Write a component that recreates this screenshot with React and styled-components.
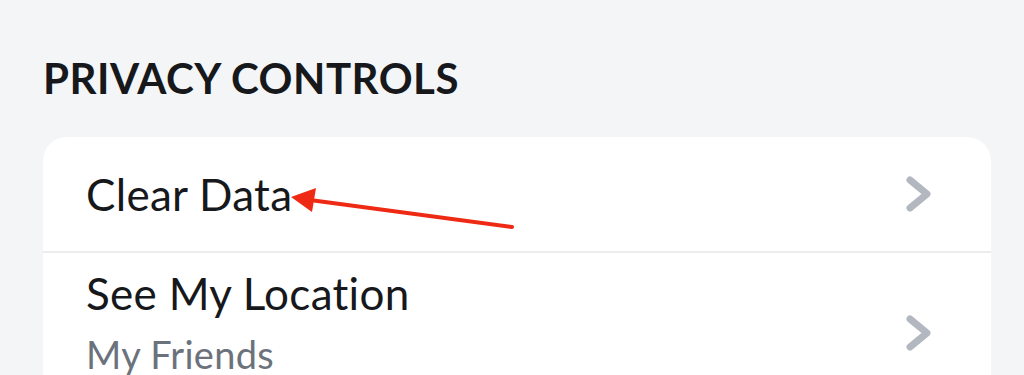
import styled, { createGlobalStyle } from 'styled-components';

const GlobalStyle = createGlobalStyle`
  html, body {
    margin: 0;
    padding: 0;
    background: #f4f5f7;
    font-family: 'Lato', 'Noto Sans', sans-serif;
  }
`;

const Page = styled.div`
  position: relative;
  width: 1024px;
  height: 375px;
  overflow: hidden;
  box-sizing: border-box;
  padding: 52px 33px 0 43px;
`;

const Heading = styled.h2`
  margin: 0 0 0 0;
  font-size: 42px;
  font-weight: 700;
  letter-spacing: 0.5px;
  color: #16181b;
  line-height: 52px;
`;

const Card = styled.div`
  margin-top: 33px;
  background: #ffffff;
  border-radius: 24px;
  overflow: hidden;
`;

const Row = styled.div`
  display: flex;
  align-items: center;
  justify-content: space-between;
  height: ${(p) => p.$height}px;
  padding: 0 58px 0 43px;
  border-top: ${(p) => (p.$divider ? '2px solid #ececee' : 'none')};
`;

const Texts = styled.div`
  display: flex;
  flex-direction: column;
  align-self: ${(p) => (p.$top ? 'flex-start' : 'center')};
  padding-top: ${(p) => p.$pad || 0}px;
`;

const Title = styled.div`
  font-size: 44px;
  color: #16181b;
  line-height: 56px;
  letter-spacing: 0.3px;
`;

const Sub = styled.div`
  margin-top: 9px;
  font-size: 38px;
  color: #6c727c;
  line-height: 48px;
  letter-spacing: 0.3px;
`;

const Chevron = () => (
  <svg width="28" height="38" viewBox="0 0 28 38">
    <path d="M5 5 L22 19 L5 33" fill="none" stroke="#b3b8c0" strokeWidth="7" strokeLinecap="round" strokeLinejoin="round" />
  </svg>
);

const Annotation = styled.svg`
  position: absolute;
  left: 0;
  top: 0;
  pointer-events: none;
`;

export default function App() {
  return (
    <Page>
      <GlobalStyle />
      <Heading>PRIVACY CONTROLS</Heading>
      <Card>
        <Row $height={114}>
          <Texts>
            <Title>Clear Data</Title>
          </Texts>
          <Chevron />
        </Row>
        <Row $height={160} $divider>
          <Texts $top $pad={12}>
            <Title>See My Location</Title>
            <Sub>My Friends</Sub>
          </Texts>
          <Chevron />
        </Row>
      </Card>
      <Annotation width="1024" height="375" viewBox="0 0 1024 375">
        <line x1="512" y1="227" x2="310" y2="200" stroke="#ee2a14" strokeWidth="4" strokeLinecap="round" />
        <polygon points="291,197 316,188 312,212" fill="#ee2a14" />
      </Annotation>
    </Page>
  );
}
